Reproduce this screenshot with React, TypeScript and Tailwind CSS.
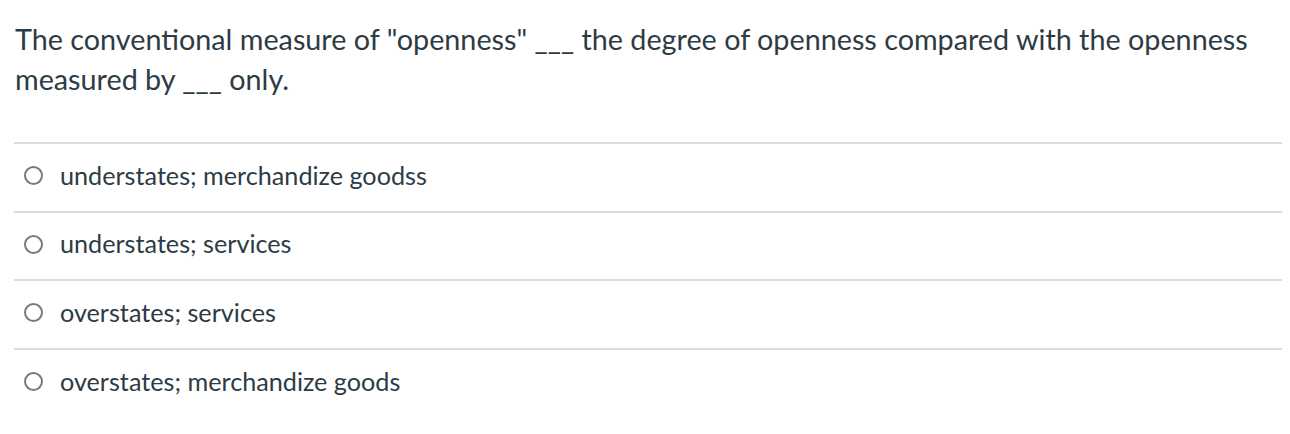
const answers = [
  "understates; merchandize goodss",
  "understates; services",
  "overstates; services",
  "overstates; merchandize goods",
];

export default function App() {
  return (
    <div className="w-[1290px] h-[434px] bg-white pl-[14px] pr-[8px] pt-[19px] font-['Lato','Liberation_Sans',sans-serif] text-[#2d3b45]">
      {/* Question */}
      <p className="pl-[1px] text-[28.75px] leading-[40px] pr-[20px]">
        The conventional measure of "openness" ___ the degree of openness compared with the openness measured by ___ only.
      </p>

      {/* Answers */}
      <div className="mt-[43px]">
        {answers.map((a, i) => (
          <label
            key={a}
            className={`flex items-center border-t-2 border-[#dcdcdc] pl-[10px] gap-[17px] pb-[4px] ${i === 1 ? "h-[68px]" : "h-[69px]"}`}
          >
            <span className="w-[19px] h-[19px] rounded-full border-2 border-[#7a7a7a] flex-shrink-0" />
            <span className="text-[25.2px]">{a}</span>
          </label>
        ))}
      </div>
    </div>
  );
}
